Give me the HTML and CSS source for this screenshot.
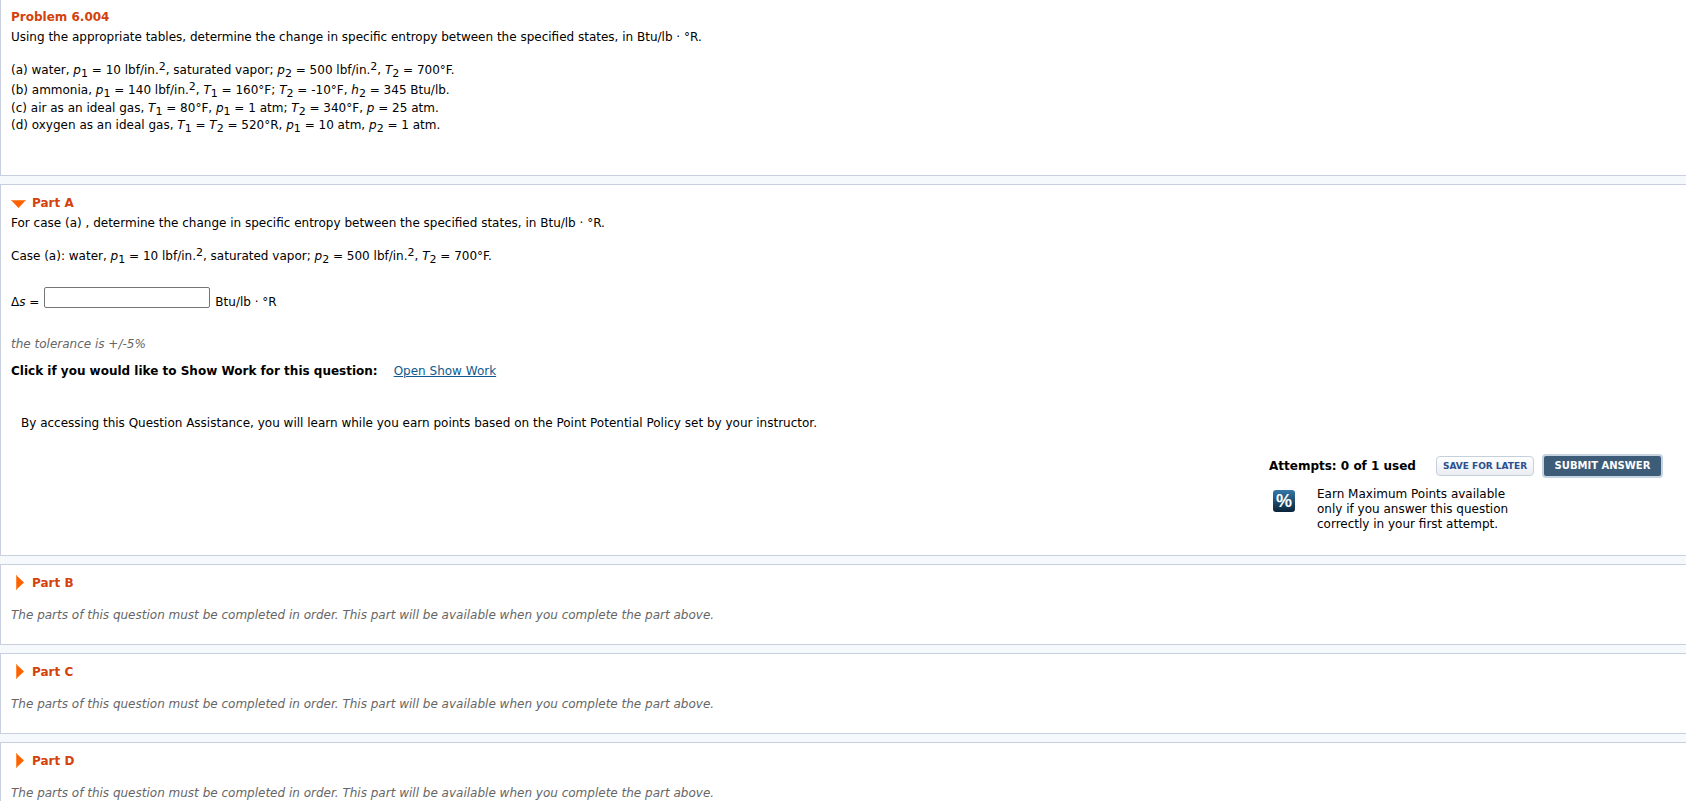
FILE: index.html
```html
<!DOCTYPE html>
<html lang="en">
<head>
<meta charset="utf-8">
<title>Problem 6.004</title>
<link rel="stylesheet" href="styles.css">
</head>
<body>
<main class="page">
  <section class="panel intro">
    <h1 class="heading">Problem 6.004</h1>
    <p class="line">Using the appropriate tables, determine the change in specific entropy between the specified states, in Btu/lb · °R.</p>
    <div class="cases">
      <p class="line">(a) water, <i>p</i><sub>1</sub> = 10 lbf/in.<sup>2</sup>, saturated vapor; <i>p</i><sub>2</sub> = 500 lbf/in.<sup>2</sup>, <i>T</i><sub>2</sub> = 700°F.</p>
      <p class="line">(b) ammonia, <i>p</i><sub>1</sub> = 140 lbf/in.<sup>2</sup>, <i>T</i><sub>1</sub> = 160°F; <i>T</i><sub>2</sub> = -10°F, <i>h</i><sub>2</sub> = 345 Btu/lb.</p>
      <p class="line tight">(c) air as an ideal gas, <i>T</i><sub>1</sub> = 80°F, <i>p</i><sub>1</sub> = 1 atm; <i>T</i><sub>2</sub> = 340°F, <i>p</i> = 25 atm.</p>
      <p class="line tight">(d) oxygen as an ideal gas, <i>T</i><sub>1</sub> = <i>T</i><sub>2</sub> = 520°R, <i>p</i><sub>1</sub> = 10 atm, <i>p</i><sub>2</sub> = 1 atm.</p>
    </div>
  </section>

  <section class="panel part-open">
    <h2 class="heading part-heading">
      <svg class="arrow" viewBox="0 0 16 16" aria-hidden="true"><path d="M0 5h15L7.500 13z" fill="#ff6000"/><path d="M0 5h15l-1 1H1z" fill="#ff8a3c"/></svg>
      Part A
    </h2>
    <p class="line">For case (a) , determine the change in specific entropy between the specified states, in Btu/lb · °R.</p>
    <p class="line case-line">Case (a): water, <i>p</i><sub>1</sub> = 10 lbf/in.<sup>2</sup>, saturated vapor; <i>p</i><sub>2</sub> = 500 lbf/in.<sup>2</sup>, <i>T</i><sub>2</sub> = 700°F.</p>
    <div class="answer">
      <label for="delta-s">Δ<i>s</i> =</label>
      <input class="answer-box" id="delta-s" type="text">
      <span>Btu/lb · °R</span>
    </div>
    <p class="line note tolerance">the tolerance is +/-5%</p>
    <p class="line show-work"><b>Click if you would like to Show Work for this question:</b><a class="link" href="#">Open Show Work</a></p>
    <p class="line assistance">By accessing this Question Assistance, you will learn while you earn points based on the Point Potential Policy set by your instructor.</p>
    <div class="footer">
      <div class="actions">
        <b class="attempts">Attempts: 0 of 1 used</b>
        <button class="button save" type="button">SAVE FOR LATER</button>
        <button class="button submit" type="button">SUBMIT ANSWER</button>
      </div>
      <div class="points">
        <span class="percent">%</span>
        <p class="points-text">Earn Maximum Points available<br>only if you answer this question<br>correctly in your first attempt.</p>
      </div>
    </div>
  </section>

  <section class="panel part-closed">
    <h2 class="heading part-heading"><svg class="arrow" viewBox="0 0 16 16" aria-hidden="true"><path d="M5 0l8 7.500-8 7.500z" fill="#ff6000"/><path d="M5 0l1 1v13l-1 1z" fill="#ff8a3c"/></svg>Part B</h2>
    <p class="line note">The parts of this question must be completed in order. This part will be available when you complete the part above.</p>
  </section>
  <section class="panel part-closed">
    <h2 class="heading part-heading"><svg class="arrow" viewBox="0 0 16 16" aria-hidden="true"><path d="M5 0l8 7.500-8 7.500z" fill="#ff6000"/><path d="M5 0l1 1v13l-1 1z" fill="#ff8a3c"/></svg>Part C</h2>
    <p class="line note">The parts of this question must be completed in order. This part will be available when you complete the part above.</p>
  </section>
  <section class="panel part-closed">
    <h2 class="heading part-heading"><svg class="arrow" viewBox="0 0 16 16" aria-hidden="true"><path d="M5 0l8 7.500-8 7.500z" fill="#ff6000"/><path d="M5 0l1 1v13l-1 1z" fill="#ff8a3c"/></svg>Part D</h2>
    <p class="line note">The parts of this question must be completed in order. This part will be available when you complete the part above.</p>
  </section>
</main>
</body>
</html>
```
FILE: styles.css
```css
* {
  box-sizing: border-box;
}

html {
  overflow: hidden;
}

body {
  margin: 0;
  background: #f5f9fc;
  color: #000;
  font: 12px/20px Verdana, "DejaVu Sans", sans-serif;
}

.page {
  display: flex;
  flex-direction: column;
  gap: 8px;
}

.panel {
  background: #fff;
  border: 1px solid #c8d0df;
  border-right: 0;
  padding: 8px 23px 0 10px;
}

.intro {
  border-top: 0;
  padding: 7px 10px 41px;
}

.heading {
  margin: 0;
  color: #d4420c;
  font-size: 12px;
  line-height: 20px;
}

.part-heading {
  display: flex;
  align-items: center;
  gap: 5px;
}

.arrow {
  width: 16px;
  height: 16px;
}

.line {
  margin: 0;
}

.tight {
  line-height: 17px;
}

.cases {
  margin-top: 13px;
}

sub,
sup {
  font-size: 11px;
  line-height: 0;
}

sub {
  vertical-align: -3px;
}

sup {
  vertical-align: 4px;
}

.case-line {
  margin-top: 13px;
}

.answer {
  display: flex;
  align-items: flex-end;
  gap: 5px;
  margin-top: 21px;
}

.answer-box {
  width: 166px;
  height: 21px;
  margin-bottom: 4px;
  border: 1px solid #767676;
  border-radius: 2px;
  padding: 1px 4px;
  font: inherit;
}

.note {
  color: #666;
  font-style: italic;
}

.tolerance {
  margin-top: 22px;
}

.show-work {
  display: flex;
  gap: 16px;
  margin-top: 7px;
}

.link {
  color: #0f5a8e;
}

.assistance {
  margin-top: 32px;
  padding-left: 10px;
}

.footer {
  display: flex;
  flex-direction: column;
  align-items: flex-end;
  padding: 21px 0 23px;
}

.actions,
.points {
  display: flex;
  width: 394px;
}

.actions {
  align-items: center;
}

.attempts {
  flex: 1;
}

.button {
  border-radius: 4px;
  padding: 0;
  white-space: nowrap;
}

.save {
  width: 98px;
  height: 20px;
  margin-right: 8px;
  border: 1px solid #c5d0da;
  background: linear-gradient(#fff, #e9ecf2);
  color: #2c4f8f;
  font: bold 9px/16px Verdana, "DejaVu Sans", sans-serif;
}

.submit {
  width: 121px;
  height: 24px;
  border: 2px solid #c6d3e0;
  background: #3c5c78;
  color: #fff;
  font: bold 10px/18px Verdana, "DejaVu Sans", sans-serif;
}

.points {
  gap: 22px;
  padding: 9px 4px 0;
}

.percent {
  width: 22px;
  height: 22px;
  margin-top: 3px;
  border-radius: 3px;
  background: linear-gradient(#3578a8, #0a2438);
  color: #fff;
  font: bold 18px/22px "Liberation Sans", Arial, sans-serif;
  text-align: center;
}

.points-text {
  margin: 0;
  line-height: 15px;
}

.part-closed {
  padding-bottom: 19px;
}

.part-closed .note {
  margin-top: 12px;
}
```
